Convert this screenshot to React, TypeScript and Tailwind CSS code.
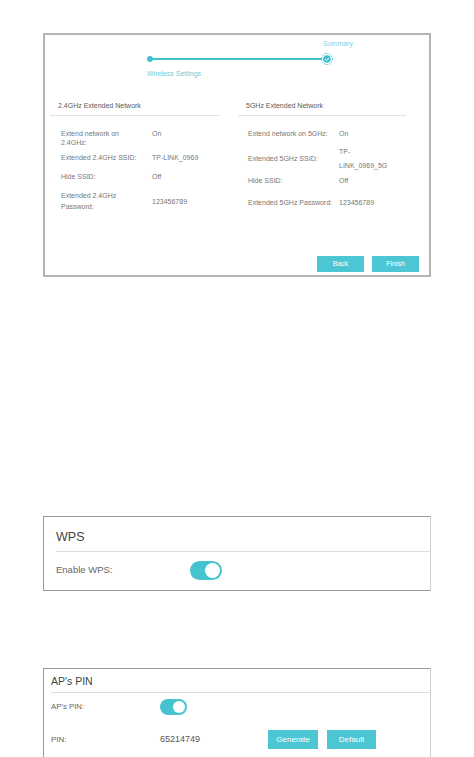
import React from "react";

const Toggle = ({ w, h }: { w: number; h: number }) => (
  <div
    className="rounded-full bg-[#45c4d0] flex items-center justify-end"
    style={{ width: w, height: h, paddingRight: 2 }}
  >
    <div className="rounded-full bg-white" style={{ width: h - 4, height: h - 4 }} />
  </div>
);

export default function App() {
  return (
    <div
      className="w-[474px] h-[757px] overflow-hidden bg-white flex flex-col pt-[33px] text-[#666]"
      style={{ fontFamily: '"Liberation Sans", Arial, sans-serif' }}
    >
      {/* Box 1 */}
      <div className="ml-[43px] w-[388px] h-[244px] border-2 border-[#b4b4b4] flex flex-col text-[#777]">
        {/* Stepper */}
        <div className="ml-[101px] w-[212px] mt-[4px] flex flex-col">
          <div className="pl-[177px] text-[7px] leading-[9px] text-[#7fd3dd] h-[9px]">Summary</div>
          <svg width="190" height="14" className="mt-[4px]">
            <line x1="4" y1="7" x2="181" y2="7" stroke="#3fc1d0" strokeWidth="2" />
            <circle cx="4" cy="7" r="3" fill="#3fc1d0" />
            <circle cx="181" cy="7" r="5.5" fill="white" stroke="#3fc1d0" strokeWidth="1" strokeDasharray="1.5 1" />
            <circle cx="181" cy="7" r="3.8" fill="#3fc1d0" />
            <path d="M179.2 7.1 L180.6 8.4 L183 5.8" fill="none" stroke="white" strokeWidth="1" />
          </svg>
          <div className="mt-[3px] pl-[1px] text-[7px] leading-[9px] text-[#6fcdd8]">Wireless Settings</div>
        </div>

        {/* Columns */}
        <div className="flex ml-[5px] mt-[23px] gap-[18px] text-[7px]">
          {/* Left */}
          <div className="w-[170px] flex flex-col">
            <div className="h-[15px] border-b border-[#e2e2e2] pl-[8px] leading-[9px] text-[#5a5a5a]">
              2.4GHz Extended Network
            </div>
            <div className="pl-[11px] flex flex-col">
              <div className="flex items-start mt-[13px] leading-[9px]">
                <div className="w-[91px] pr-[10px]">Extend network on 2.4GHz:</div>
                <div>On</div>
              </div>
              <div className="flex items-center mt-[5px] leading-[11px]">
                <div className="w-[91px]">Extended 2.4GHz SSID:</div>
                <div>TP-LINK_0969</div>
              </div>
              <div className="flex items-center mt-[8px] leading-[11px]">
                <div className="w-[91px]">Hide SSID:</div>
                <div>Off</div>
              </div>
              <div className="flex items-center mt-[8px] leading-[11px]">
                <div className="w-[91px] pr-[20px]">Extended 2.4GHz Password:</div>
                <div>123456789</div>
              </div>
            </div>
          </div>
          {/* Right */}
          <div className="w-[168px] flex flex-col">
            <div className="h-[15px] border-b border-[#e2e2e2] pl-[8px] leading-[9px] text-[#5a5a5a]">
              5GHz Extended Network
            </div>
            <div className="pl-[10px] flex flex-col">
              <div className="flex items-center mt-[12px] leading-[11px]">
                <div className="w-[91px]">Extend network on 5GHz:</div>
                <div>On</div>
              </div>
              <div className="flex items-center mt-[6px] leading-[14px]">
                <div className="w-[91px]">Extended 5GHz SSID:</div>
                <div className="w-[55px]">TP-<br />LINK_0969_5G</div>
              </div>
              <div className="flex items-center mt-[2px] leading-[11px]">
                <div className="w-[91px]">Hide SSID:</div>
                <div>Off</div>
              </div>
              <div className="flex items-center mt-[11px] leading-[11px]">
                <div className="w-[91px]">Extended 5GHz Password:</div>
                <div>123456789</div>
              </div>
            </div>
          </div>
        </div>

        {/* Buttons */}
        <div className="mt-auto flex justify-end gap-[8px] pr-[10px] pb-[3px]">
          <div className="w-[47px] h-[16px] bg-[#4cc6d3] text-white text-[7px] flex items-center justify-center">Back</div>
          <div className="w-[47px] h-[16px] bg-[#4cc6d3] text-white text-[7px] flex items-center justify-center">Finish</div>
        </div>
      </div>

      {/* Box 2: WPS */}
      <div className="ml-[43px] w-[388px] h-[75px] mt-[239px] border border-[#9a9a9a] border-r-[#cfcfcf] flex flex-col">
        <div className="ml-[12px] h-[35px] border-b border-[#dcdcdc] flex items-center pt-[7px] text-[12.5px] text-[#444]">
          WPS
        </div>
        <div className="flex items-center ml-[12px] mt-[9px]">
          <div className="w-[134px] text-[9.5px] text-[#666]">Enable WPS:</div>
          <Toggle w={32} h={19} />
        </div>
      </div>

      {/* Box 3: AP's PIN */}
      <div className="ml-[43px] w-[388px] flex-1 mt-[77px] border border-b-0 border-[#9a9a9a] border-r-[#cfcfcf] flex flex-col">
        <div className="ml-[7px] h-[24px] border-b border-[#dcdcdc] flex items-center pt-[2px] text-[10.5px] text-[#444]">
          AP's PIN
        </div>
        <div className="flex items-center ml-[7px] mt-[6px]">
          <div className="w-[109px] text-[7.8px] text-[#666]">AP's PIN:</div>
          <Toggle w={27} h={16} />
        </div>
        <div className="flex items-center ml-[7px] mt-[15px]">
          <div className="w-[109px] text-[8px] text-[#666]">PIN:</div>
          <div className="w-[108px] text-[9px] text-[#555]">65214749</div>
          <div className="w-[50px] h-[19px] bg-[#4cc6d3] text-white text-[8px] flex items-center justify-center">Generate</div>
          <div className="w-[49px] h-[19px] ml-[9px] bg-[#4cc6d3] text-white text-[8px] flex items-center justify-center">Default</div>
        </div>
      </div>
    </div>
  );
}
